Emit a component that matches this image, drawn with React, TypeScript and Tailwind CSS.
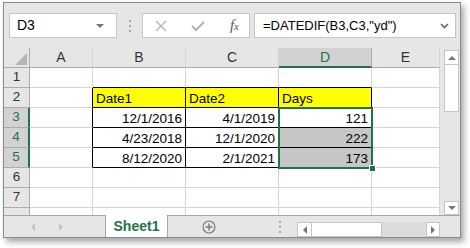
import React from "react";

const GREEN = "#217346";

type Row = { n: number; cells: string[] };

const rows: Row[] = [
  { n: 1, cells: ["", "", "", "", ""] },
  { n: 2, cells: ["", "Date1", "Date2", "Days", ""] },
  { n: 3, cells: ["", "12/1/2016", "4/1/2019", "121", ""] },
  { n: 4, cells: ["", "4/23/2018", "12/1/2020", "222", ""] },
  { n: 5, cells: ["", "8/12/2020", "2/1/2021", "173", ""] },
  { n: 6, cells: ["", "", "", "", ""] },
  { n: 7, cells: ["", "", "", "", ""] },
];

const cols = ["A", "B", "C", "D", "E"];

const cellClass = (r: number, c: number) => {
  const inTable = r >= 2 && r <= 5;
  const rightBlack = inTable && c <= 3;
  const bottomBlack = c >= 1 && c <= 3 && r >= 1 && r <= 5;
  let bg = "bg-white";
  if (r === 2 && c >= 1 && c <= 3) bg = "bg-[#ffff00]";
  if (c === 3 && (r === 4 || r === 5)) bg = "bg-[#c6c6c6]";
  return [
    "h-[20px] border-r border-b flex items-end pb-[2px] px-[3px] leading-none text-[13.5px] text-black",
    rightBlack ? "border-r-black" : "border-r-[#d4d4d4]",
    bottomBlack ? "border-b-black" : "border-b-[#d4d4d4]",
    r === 2 ? "justify-start" : "justify-end",
    bg,
  ].join(" ");
};

const Tri = ({ dir, className }: { dir: "up" | "down" | "left" | "right"; className?: string }) => {
  const pts = {
    up: "0,5 4,1 8,5",
    down: "0,1 8,1 4,5",
    left: "5,0 5,8 1,4",
    right: "1,0 1,8 5,4",
  }[dir];
  const vb = dir === "up" || dir === "down" ? "0 0 8 6" : "0 0 6 8";
  const size = dir === "up" || dir === "down" ? { w: 8, h: 6 } : { w: 6, h: 8 };
  return (
    <svg width={size.w} height={size.h} viewBox={vb} className={className}>
      <polygon points={pts} fill="currentColor" />
    </svg>
  );
};

const Dots = () => (
  <div className="flex flex-col gap-[3px]">
    <div className="w-[2px] h-[2px] bg-[#a8a8a8]" />
    <div className="w-[2px] h-[2px] bg-[#a8a8a8]" />
    <div className="w-[2px] h-[2px] bg-[#a8a8a8]" />
  </div>
);

export default function App() {
  return (
    <div className="w-[470px] h-[248px] bg-white font-['Liberation_Sans',Arial,sans-serif] pt-[2px] pl-[3px]">
      <div className="w-[458px] h-[236px] border border-[#8a8a8a] bg-[#e6e6e6] shadow-[3px_4px_6px_rgba(0,0,0,0.35)] flex flex-col">
        {/* Formula bar */}
        <div className="h-[45px] flex items-start pt-[10px] pl-[5px] shrink-0">
          <div className="w-[108px] h-[25px] bg-white border border-[#c6c6c6] flex items-center pl-[7px] pr-[12px] justify-between">
            <span className="text-[14px] text-black">D3</span>
            <Tri dir="down" className="text-[#777]" />
          </div>
          <div className="w-[25px] h-[25px] flex items-center justify-center">
            <Dots />
          </div>
          <div className="w-[108px] h-[25px] bg-white border border-[#c6c6c6] flex items-center pl-[12px] pr-[10px] justify-between">
            <svg width="12" height="12" viewBox="0 0 12 12">
              <path d="M1 1 L11 11 M11 1 L1 11" stroke="#b4b4b4" strokeWidth="1.4" />
            </svg>
            <svg width="14" height="12" viewBox="0 0 14 12">
              <path d="M1 6 L5 10 L13 2" stroke="#b4b4b4" strokeWidth="2" fill="none" />
            </svg>
            <span className="font-['Liberation_Serif',serif] italic text-[15px] text-[#555] leading-none">
              f<span className="text-[11px]">x</span>
            </span>
          </div>
          <div className="ml-[4px] w-[202px] h-[25px] bg-white border border-[#c6c6c6] flex items-center pl-[8px] pr-[6px] justify-between">
            <span className="text-[13px] text-black">=DATEDIF(B3,C3,"yd")</span>
            <svg width="9" height="6" viewBox="0 0 9 6">
              <path d="M1 1 L4.5 4.5 L8 1" stroke="#666" strokeWidth="1.6" fill="none" />
            </svg>
          </div>
        </div>

        {/* Grid + vertical scrollbar */}
        <div className="flex h-[167px] shrink-0">
          <div className="relative w-[436px] overflow-hidden">
            <div className="grid grid-cols-[26px_63px_93px_93px_93px_68px]">
              {/* header row */}
              <div className="h-[20px] border-r border-b border-[#ababab] bg-[#e6e6e6] flex items-end justify-end pr-[2px] pb-[2px]">
                <svg width="12" height="12" viewBox="0 0 12 12">
                  <polygon points="12,0 12,12 0,12" fill="#b5b5b5" />
                </svg>
              </div>
              {cols.map((c) => (
                <div
                  key={c}
                  className={
                    c === "D"
                      ? "h-[20px] border-r border-r-[#ababab] border-b-2 border-b-[#217346] bg-[#d2d2d2] flex items-center justify-center text-[14px] text-[#217346]"
                      : "h-[20px] border-r border-b border-[#d4d4d4] border-b-[#ababab] bg-[#e6e6e6] flex items-center justify-center text-[14px] text-[#333]"
                  }
                >
                  {c}
                </div>
              ))}
              {rows.map((row) => (
                <React.Fragment key={row.n}>
                  <div
                    className={
                      row.n >= 3 && row.n <= 5
                        ? "h-[20px] border-r-2 border-r-[#217346] border-b border-b-[#ababab] bg-[#d2d2d2] flex items-center justify-center text-[13.5px] text-[#217346]"
                        : "h-[20px] border-r border-b border-[#ababab] bg-[#e6e6e6] flex items-center justify-center text-[13.5px] text-[#333]"
                    }
                  >
                    {row.n}
                  </div>
                  {row.cells.map((v, ci) => (
                    <div key={ci} className={cellClass(row.n, ci)}>
                      {v}
                    </div>
                  ))}
                </React.Fragment>
              ))}
              {/* partial row 8 */}
              <div className="h-[7px] border-r border-[#ababab] bg-[#e6e6e6]" />
              {cols.map((c) => (
                <div key={c} className="h-[7px] border-r border-[#d4d4d4] bg-white" />
              ))}
            </div>

            {/* selection D3:D5 */}
            <div className="absolute left-[274px] top-[59px] w-[95px] h-[62px] border-2 border-[#217346] pointer-events-none" />
            <div className="absolute left-[365px] top-[117px] w-[7px] h-[7px] bg-[#217346] border border-white" />
          </div>

          <div className="w-[4px]" />
          <div className="w-[15px] flex flex-col pt-[2px]">
            <div className="h-[15px] bg-white border border-[#c6c6c6] flex items-center justify-center">
              <Tri dir="up" className="text-[#777]" />
            </div>
            <div className="h-[47px] bg-white border border-t-0 border-[#c6c6c6]" />
            <div className="flex-1" />
            <div className="h-[14px] bg-white border border-[#c6c6c6] flex items-center justify-center">
              <Tri dir="down" className="text-[#777]" />
            </div>
          </div>
        </div>

        {/* Tab bar */}
        <div className="flex h-[22px] shrink-0">
          <div className="w-[101px] border-t border-[#a6a6a6] flex items-center pl-[26px] gap-[22px]">
            <Tri dir="left" className="text-[#c4c4c4]" />
            <Tri dir="right" className="text-[#c4c4c4]" />
          </div>
          <div className="w-[63px] bg-white border-x border-[#a6a6a6] flex items-center justify-center">
            <span className="font-bold text-[14px] text-[#217346]" style={{ color: GREEN }}>
              Sheet1
            </span>
          </div>
          <div className="w-[129px] border-t border-[#a6a6a6] flex items-center">
            <svg width="14" height="14" viewBox="0 0 14 14" className="ml-[34px]">
              <circle cx="7" cy="7" r="6" stroke="#7a7a7a" strokeWidth="1.2" fill="none" />
              <path d="M7 3.5 V10.5 M3.5 7 H10.5" stroke="#7a7a7a" strokeWidth="1.4" />
            </svg>
            <div className="ml-[63px]">
              <Dots />
            </div>
          </div>
          <div className="w-[143px] border-t border-[#a6a6a6] flex items-end pb-[0px]">
            <div className="flex h-[15px] w-full">
              <div className="w-[15px] bg-white border border-[#c6c6c6] flex items-center justify-center">
                <Tri dir="left" className="text-[#777]" />
              </div>
              <div className="w-[70px] bg-white border border-l-0 border-[#c6c6c6]" />
              <div className="flex-1 bg-[#dcdcdc]" />
              <div className="w-[14px] bg-white border border-[#c6c6c6] flex items-center justify-center">
                <Tri dir="right" className="text-[#777]" />
              </div>
            </div>
          </div>
          <div className="flex-1 border-t border-[#a6a6a6]" />
        </div>
      </div>
    </div>
  );
}
